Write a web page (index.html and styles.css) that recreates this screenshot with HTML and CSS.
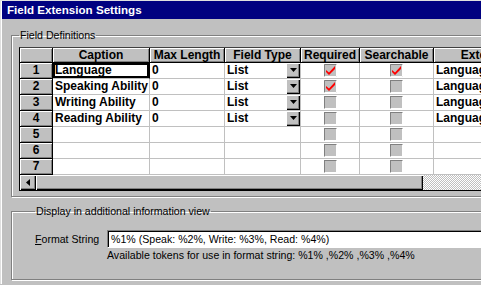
FILE: index.html
```html
<!DOCTYPE html>
<html>
<head>
<meta charset="utf-8">
<link rel="stylesheet" href="styles.css">
</head>
<body>
<div class="window">
  <div class="titlebar">Field Extension Settings</div>
  <fieldset class="group group-defs">
    <legend>Field Definitions</legend>
    <div class="grid">
      <div class="h"></div>
      <div class="h">Caption</div>
      <div class="h">Max Length</div>
      <div class="h">Field Type</div>
      <div class="h">Required</div>
      <div class="h">Searchable</div>
      <div class="h h-left">Extension</div>

      <div class="r">1</div>
      <div class="c sel">Language</div>
      <div class="c">0</div>
      <div class="c ft">List<span class="dd"><svg width="7" height="4" viewBox="0 0 7 4"><path d="M0 0H7L3.5 4Z" fill="#000"/></svg></span></div>
      <div class="c cb"><svg class="chk" width="13" height="13" viewBox="0 0 13 13"><rect width="13" height="13" fill="#c0c0c0"/><path d="M0.5 12.5V0.5H12.5" stroke="#808080" fill="none"/><path d="M0.5 12.5H12.5V0.5" stroke="#fff" fill="none"/><path d="M2 6L5 8.5L11 2L11 5L5 11L2 8Z" fill="#f00"/></svg></div>
      <div class="c cb"><svg class="chk" width="13" height="13" viewBox="0 0 13 13"><rect width="13" height="13" fill="#c0c0c0"/><path d="M0.5 12.5V0.5H12.5" stroke="#808080" fill="none"/><path d="M0.5 12.5H12.5V0.5" stroke="#fff" fill="none"/><path d="M2 6L5 8.5L11 2L11 5L5 11L2 8Z" fill="#f00"/></svg></div>
      <div class="c">Language</div>

      <div class="r">2</div>
      <div class="c">Speaking Ability</div>
      <div class="c">0</div>
      <div class="c ft">List<span class="dd"><svg width="7" height="4" viewBox="0 0 7 4"><path d="M0 0H7L3.5 4Z" fill="#000"/></svg></span></div>
      <div class="c cb"><svg class="chk" width="13" height="13" viewBox="0 0 13 13"><rect width="13" height="13" fill="#c0c0c0"/><path d="M0.5 12.5V0.5H12.5" stroke="#808080" fill="none"/><path d="M0.5 12.5H12.5V0.5" stroke="#fff" fill="none"/><path d="M2 6L5 8.5L11 2L11 5L5 11L2 8Z" fill="#f00"/></svg></div>
      <div class="c cb"><span class="box"></span></div>
      <div class="c">Language</div>

      <div class="r">3</div>
      <div class="c">Writing Ability</div>
      <div class="c">0</div>
      <div class="c ft">List<span class="dd"><svg width="7" height="4" viewBox="0 0 7 4"><path d="M0 0H7L3.5 4Z" fill="#000"/></svg></span></div>
      <div class="c cb"><span class="box"></span></div>
      <div class="c cb"><span class="box"></span></div>
      <div class="c">Language</div>

      <div class="r">4</div>
      <div class="c">Reading Ability</div>
      <div class="c">0</div>
      <div class="c ft">List<span class="dd"><svg width="7" height="4" viewBox="0 0 7 4"><path d="M0 0H7L3.5 4Z" fill="#000"/></svg></span></div>
      <div class="c cb"><span class="box"></span></div>
      <div class="c cb"><span class="box"></span></div>
      <div class="c">Language</div>

      <div class="r">5</div>
      <div class="c"></div>
      <div class="c"></div>
      <div class="c"></div>
      <div class="c cb"><span class="box"></span></div>
      <div class="c cb"><span class="box"></span></div>
      <div class="c"></div>

      <div class="r">6</div>
      <div class="c"></div>
      <div class="c"></div>
      <div class="c"></div>
      <div class="c cb"><span class="box"></span></div>
      <div class="c cb"><span class="box"></span></div>
      <div class="c"></div>

      <div class="r">7</div>
      <div class="c"></div>
      <div class="c"></div>
      <div class="c"></div>
      <div class="c cb"><span class="box"></span></div>
      <div class="c cb"><span class="box"></span></div>
      <div class="c"></div>

      <div class="hscroll">
        <div class="sbtn"><svg width="4" height="7" viewBox="0 0 4 7"><path d="M4 0V7L0 3.5Z" fill="#000"/></svg></div>
        <div class="thumb"></div>
        <div class="track"></div>
      </div>
    </div>
  </fieldset>

  <fieldset class="group group-view">
    <legend>Display in additional information view</legend>
    <div class="formrow">
      <label class="flabel"><span class="u">F</span>ormat String</label>
      <div class="input">%1% (Speak: %2%, Write: %3%, Read: %4%)</div>
    </div>
    <div class="tokens">Available tokens for use in format string: %1% ,%2% ,%3% ,%4%</div>
  </fieldset>
</div>
</body>
</html>
```

FILE: styles.css
```css
html, body {
  margin: 0;
  padding: 0;
  background: #c0c0c0;
  overflow: hidden;
  width: 481px;
  height: 285px;
}
body {
  font-family: "Liberation Sans", Arial, sans-serif;
  font-size: 11px;
  color: #000;
}
.window {
  border-top: 1px solid #dfdfdf;
  border-left: 1px solid #dfdfdf;
  box-shadow: inset 1px 0 0 #fff;
  height: 284px;
  box-sizing: border-box;
  width: 600px;
}
.titlebar {
  margin-left: 1px;
  height: 18px;
  line-height: 18px;
  background: #000080;
  color: #fff;
  font-weight: bold;
  font-size: 11.6px;
  padding-left: 5px;
  white-space: nowrap;
}
.group {
  margin: 0 0 0 10px;
  border: 1px solid #808080;
  box-shadow: inset 1px 1px 0 #fff, 1px 1px 0 #fff;
  width: 560px;
  box-sizing: border-box;
}
.group legend {
  padding: 0 1px;
  margin-left: 0;
  line-height: 13px;
  font-size: 10.6px;
  white-space: nowrap;
}
.group-defs {
  margin-top: 10px;
  padding: 5px 0 5px 7px;
}
.group-view {
  margin-top: 8px;
  padding: 12px 0 17px 23px;
}
.grid {
  display: grid;
  grid-template-columns: 33px 97px 75px 76px 59px 74px 112px;
  grid-template-rows: 15px repeat(7, 16px) 16px;
  border-top: 1px solid #404040;
  border-left: 1px solid #000;
  font-size: 12px;
  font-weight: bold;
}
.h, .r {
  background: #c0c0c0;
  border-right: 1px solid #000;
  border-bottom: 1px solid #000;
  box-shadow: inset 1px 1px 0 #fff, inset -1px -1px 0 #808080;
  text-align: center;
  white-space: nowrap;
  overflow: hidden;
}
.h {
  line-height: 14px;
}
.h-left {
  text-align: center;
}
.r {
  line-height: 15px;
}
.c {
  background: #fff;
  border-right: 1px solid #c0c0c0;
  border-bottom: 1px solid #c0c0c0;
  padding-left: 2px;
  line-height: 15px;
  white-space: nowrap;
  overflow: hidden;
}
.sel {
  box-shadow: inset 0 0 0 2px #000;
  border-right-color: #000;
}
.ft {
  display: flex;
  align-items: flex-start;
}
.dd {
  margin-left: auto;
  width: 14px;
  height: 15px;
  box-sizing: border-box;
  background: #c0c0c0;
  box-shadow: inset 1px 1px 0 #fff, inset -1px -1px 0 #000, inset -2px -2px 0 #808080;
  display: flex;
  align-items: center;
  justify-content: center;
  padding-bottom: 1px;
}
.cb {
  display: flex;
  align-items: center;
  justify-content: center;
  padding-left: 0;
}
.box {
  width: 13px;
  height: 13px;
  box-sizing: border-box;
  background: #c0c0c0;
  border-top: 1px solid #808080;
  border-left: 1px solid #808080;
  border-right: 1px solid #fff;
  border-bottom: 1px solid #fff;
}
.chk {
  display: block;
}
.hscroll {
  grid-column: 1 / -1;
  display: flex;
  border-bottom: 1px solid #000;
  box-sizing: border-box;
}
.sbtn {
  width: 16px;
  height: 15px;
  box-sizing: border-box;
  background: #c0c0c0;
  box-shadow: inset 1px 1px 0 #fff, inset -1px -1px 0 #000, inset -2px -2px 0 #808080;
  display: flex;
  align-items: center;
  justify-content: center;
}
.thumb {
  width: 387px;
  height: 15px;
  box-sizing: border-box;
  background: #c0c0c0;
  box-shadow: inset 1px 1px 0 #fff, inset -1px -1px 0 #000, inset -2px -2px 0 #808080;
}
.track {
  flex: 1;
  height: 15px;
  background: repeating-conic-gradient(#c0c0c0 0 25%, #fff 0 50%) 0 0 / 2px 2px;
}
.formrow {
  display: flex;
  align-items: center;
}
.flabel {
  width: 72px;
  font-size: 10.6px;
}
.u {
  text-decoration: underline;
}
.input {
  flex: 1;
  height: 18px;
  box-sizing: border-box;
  background: #fff;
  border-top: 1px solid #808080;
  border-left: 1px solid #808080;
  border-right: 1px solid #fff;
  border-bottom: 1px solid #fff;
  box-shadow: inset 1px 1px 0 #000;
  padding-left: 3px;
  line-height: 16px;
  font-size: 10.6px;
  white-space: nowrap;
}
.tokens {
  margin-left: 72px;
  margin-top: 1px;
  line-height: 13px;
  font-size: 10.6px;
  white-space: nowrap;
}
```
